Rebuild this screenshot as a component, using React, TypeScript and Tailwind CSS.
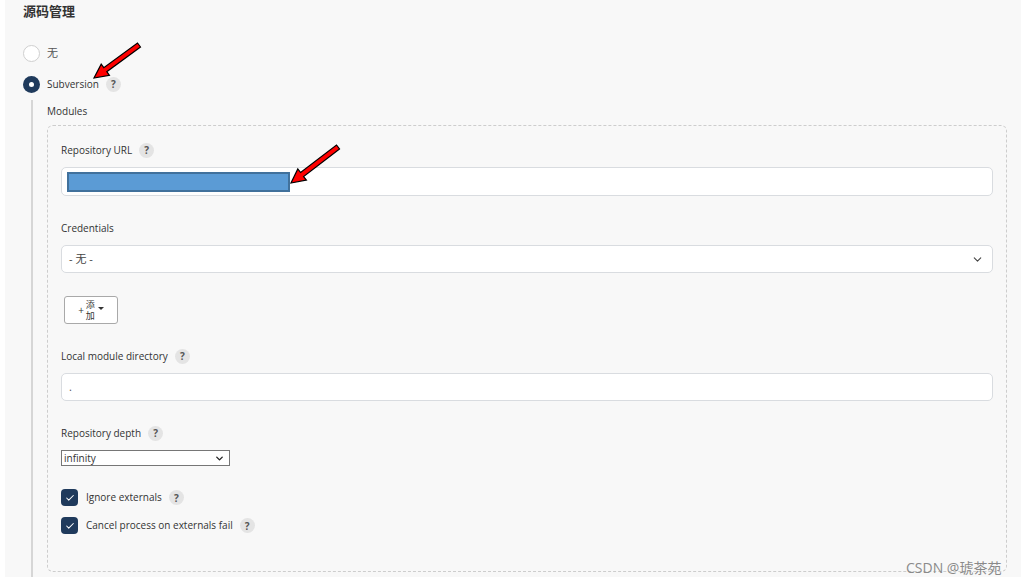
import { ChevronDown, Check } from 'lucide-react';

const font = { fontFamily: '"Open Sans", "Noto Sans", "Noto Sans CJK SC", sans-serif' };

function Help() {
  return (
    <span className="ml-[7px] inline-flex h-[15px] w-[15px] items-center justify-center rounded-full bg-[#e4e4e4] text-[10px] font-bold leading-none text-[#555]">
      ?
    </span>
  );
}

function Label({ text, help = false }: { text: string; help?: boolean }) {
  return (
    <div className="flex h-[16px] items-center text-[10px] leading-[16px] text-[#333]">
      <span>{text}</span>
      {help && <Help />}
    </div>
  );
}

function CheckRow({ text, className }: { text: string; className?: string }) {
  return (
    <div className={`flex h-[17px] items-center ${className ?? ''}`}>
      <span className="flex h-[17px] w-[17px] items-center justify-center rounded-[4px] bg-[#1f3a5c]">
        <Check size={10} strokeWidth={2.5} className="text-white" />
      </span>
      <span className="ml-[8px] text-[10px] text-[#333]">{text}</span>
      <Help />
    </div>
  );
}

function Arrows() {
  return (
    <svg className="pointer-events-none absolute inset-0" width="1021" height="584">
      <polygon
        points="140.5,47 106.8,71.7 109.4,75.3 94,78 101.2,64.1 103.8,67.7 137.5,43"
        fill="#ff0000"
        stroke="#000"
        strokeWidth="1.2"
        strokeLinejoin="miter"
      />
      <polygon
        points="339.5,149 303.6,176.5 306.4,180.1 291,183 297.8,168.9 300.6,172.5 336.5,145"
        fill="#ff0000"
        stroke="#000"
        strokeWidth="1.2"
        strokeLinejoin="miter"
      />
    </svg>
  );
}

export default function App() {
  return (
    <div className="relative h-[584px] w-[1021px] overflow-hidden bg-white" style={font}>
      <div className="ml-[5px] h-[577px] bg-[#f8f8f8] pl-[18px] pr-[14px]">
        <div className="flex h-[24px] items-center text-[13px] font-bold text-[#333]">源码管理</div>

        {/* radio: none */}
        <div className="mt-[19px] flex h-[20px] items-center">
          <span className="h-[17px] w-[17px] rounded-full border-[1.5px] border-[#cfcfcf] bg-white" />
          <span className="ml-[7px] text-[11px] text-[#555]">无</span>
        </div>

        {/* radio: subversion */}
        <div className="mt-[11px] flex h-[20px] items-center">
          <span className="flex h-[17px] w-[17px] items-center justify-center rounded-full bg-[#1f3a5c]">
            <span className="h-[5px] w-[5px] rounded-full bg-white" />
          </span>
          <span className="ml-[7px] text-[10px] text-[#333]">Subversion</span>
          <Help />
        </div>

        <div className="ml-[8px] mt-[6px] h-[477px] border-l-2 border-[#d6d6d6] pl-[14px]">
          <div className="pt-[3px] text-[10px] leading-[16px] text-[#333]">Modules</div>

          <div className="mt-[6px] rounded-[6px] border border-dashed border-[#cdcdcd] px-[13px] pb-[37px] pt-[16px]">
            <Label text="Repository URL" help />
            <div className="mt-[9px] flex h-[29px] items-center rounded-[5px] border border-[#d9dce0] bg-white px-[5px]">
              <div className="h-[20px] w-[223px] border-2 border-[#41719c] bg-[#5b9bd5]" />
            </div>

            <div className="mt-[24px]">
              <Label text="Credentials" />
            </div>
            <div className="mt-[9px] flex h-[28px] items-center justify-between rounded-[5px] border border-[#d9dce0] bg-white pl-[7px] pr-[8px] text-[11px] text-[#444]">
              <span>- 无 -</span>
              <ChevronDown size={13} strokeWidth={2} className="text-[#444]" />
            </div>

            <div className="mt-[23px] ml-[3px] flex h-[28px] w-[54px] items-center justify-center rounded-[3px] border border-[#a9a9a9] bg-white text-[#333]">
              <span className="text-[10px] leading-none">+</span>
              <span className="ml-[2px] flex flex-col items-center text-[9px] leading-[11px]">
                <span>添</span>
                <span>加</span>
              </span>
              <span className="ml-[3px] mb-[4px] h-0 w-0 border-x-[3px] border-t-[3px] border-x-transparent border-t-[#333]" />
            </div>

            <div className="mt-[24px]">
              <Label text="Local module directory" help />
            </div>
            <div className="mt-[9px] flex h-[28px] items-center rounded-[5px] border border-[#d9dce0] bg-white pl-[7px] text-[11px] text-[#555]">
              .
            </div>

            <div className="mt-[24px]">
              <Label text="Repository depth" help />
            </div>
            <div className="mt-[9px] flex h-[16px] w-[169px] items-center justify-between border border-[#767676] bg-white pl-[2px] pr-[4px] text-[10px] text-[#333]">
              <span>infinity</span>
              <ChevronDown size={11} strokeWidth={3} className="text-[#222]" />
            </div>

            <CheckRow text="Ignore externals" className="mt-[23px]" />
            <CheckRow text="Cancel process on externals fail" className="mt-[11px]" />
          </div>
        </div>
      </div>

      <Arrows />

      <div className="absolute left-[906px] top-[559px] text-[14px] leading-[18px] text-[#8a8a8a]">
        CSDN @琥茶苑
      </div>
    </div>
  );
}
